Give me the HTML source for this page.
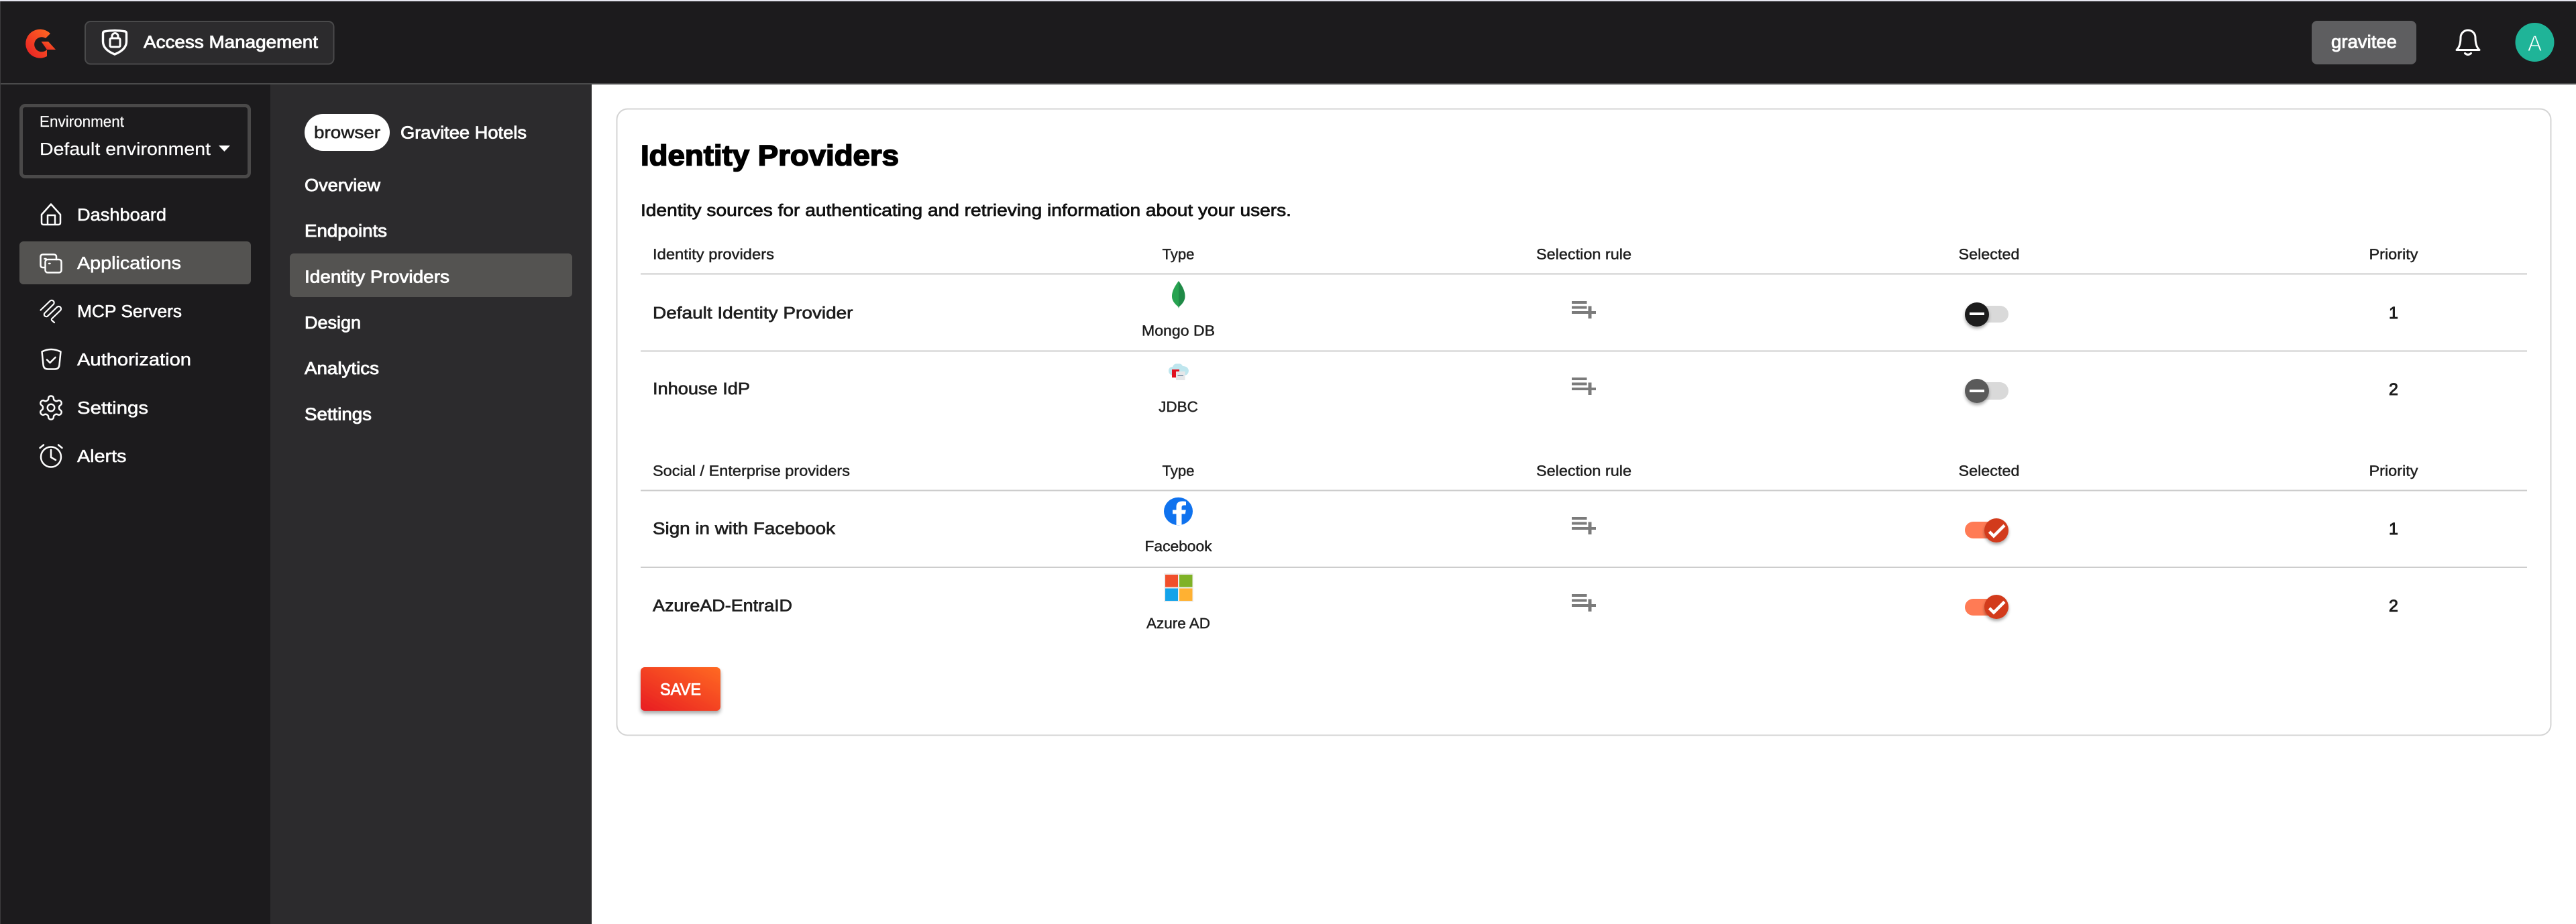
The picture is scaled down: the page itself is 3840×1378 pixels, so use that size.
<!DOCTYPE html>
<html lang="en">
<head>
<meta charset="utf-8">
<title>Identity Providers</title>
<style>
html,body{margin:0;padding:0;background:#fff;width:3840px;height:1378px;overflow:hidden}
svg{display:block}
text{font-family:"Liberation Sans",sans-serif;white-space:pre;text-rendering:geometricPrecision}
.w{fill:#fff;stroke:#fff}
.k{fill:#1f1f1f;stroke:#1f1f1f}
.r{stroke-width:.2}
.m{stroke-width:.55}
.s{stroke-width:.85}
.e{stroke-width:.45}
.ic{fill:none;stroke:#fff;stroke-width:2.5;stroke-linecap:round;stroke-linejoin:round}
.h{font-size:22px}
.l{font-size:22px}
.t{font-size:25px;stroke-width:.7}
.n{font-size:25px;stroke-width:1}
.nav{font-size:26px}
.c{text-anchor:middle}
</style>
</head>
<body>
<svg width="3840" height="1378" viewBox="0 0 3840 1378" xmlns="http://www.w3.org/2000/svg">
<defs>
<linearGradient id="gg" x1="0" y1="1" x2="1" y2="0"><stop offset="0" stop-color="#e81c24"/><stop offset="1" stop-color="#ff6a22"/></linearGradient>
<filter id="sh" x="-40%" y="-40%" width="180%" height="180%"><feDropShadow dx="0" dy="3" stdDeviation="2.5" flood-color="#000" flood-opacity=".35"/></filter>
<filter id="bs" x="-20%" y="-20%" width="140%" height="150%"><feDropShadow dx="0" dy="4" stdDeviation="3" flood-color="#000" flood-opacity=".35"/></filter>
<g id="pl" fill="#7b7b7b">
<rect x="2343" y="0" width="22.5" height="4"/><rect x="2343" y="7.5" width="22.5" height="4"/><rect x="2343" y="15" width="15" height="4"/>
<rect x="2358" y="15" width="21" height="4"/><rect x="2367.5" y="7.5" width="5" height="18.5"/>
</g>
</defs>

<!-- page -->
<rect width="3840" height="1378" fill="#fff"/>

<!-- sidebars -->
<rect x="0" y="126" width="403" height="1252" fill="#1c1b1d"/>
<rect x="403" y="126" width="479" height="1252" fill="#2c2b2d"/>

<!-- header -->
<rect width="3840" height="126" fill="#1c1b1d"/>
<rect width="3840" height="2" fill="#e6e6f0"/>
<rect y="124" width="3840" height="2" fill="#4a4a4b"/>
<rect x="0" y="2" width="1" height="1376" fill="#3d3c3e"/>

<!-- logo -->
<path d="M75 50A21.500 21.500 0 1 0 70 84V74A11 11 0 1 1 68 57Z" fill="url(#gg)"/>
<path d="M61.500 62H72L83 74H70Z" fill="url(#gg)"/>

<!-- product badge -->
<rect x="127" y="32" width="370.500" height="63.500" rx="8" fill="#2c2b2d" stroke="#4a4a4b" stroke-width="2"/>
<path d="M153.500 50Q153.500 47 156 46.800Q171 44 186 46.800Q188.500 47 188.500 50V62Q188.500 74 171 81Q153.500 74 153.500 62Z" fill="none" stroke="#fff" stroke-width="3.400" stroke-linejoin="round"/>
<rect x="164" y="57" width="15" height="13" rx="2" fill="none" stroke="#fff" stroke-width="3"/>
<path d="M167 56V54a4.500 4.500 0 0 1 9 0V56" fill="none" stroke="#fff" stroke-width="3"/>
<text class="w s" x="214" y="71.500" font-size="26" textLength="260" lengthAdjust="spacingAndGlyphs">Access Management</text>

<!-- top right -->
<rect x="3446" y="31" width="156" height="65" rx="8" fill="#5e5e60"/>
<text class="w s" x="3475" y="71.500" font-size="27" textLength="98" lengthAdjust="spacingAndGlyphs">gravitee</text>
<path d="M3662 74.500Q3668 69 3668 56A11 11 0 0 1 3690 56Q3690 69 3696 74.500Z" fill="none" stroke="#fff" stroke-width="3" stroke-linejoin="round"/>
<path d="M3674.500 79.500q4.500 4 9 0" fill="none" stroke="#fff" stroke-width="3" stroke-linecap="round"/>
<circle cx="3778.500" cy="63" r="29" fill="#1fb498"/>
<text x="3768" y="76" font-size="33" fill="#fff" stroke="#1fb498" stroke-width=".9" textLength="21" lengthAdjust="spacingAndGlyphs">A</text>

<!-- environment -->
<rect x="31.500" y="157.500" width="340" height="106" rx="6" fill="#1c1b1d" stroke="#4a4949" stroke-width="5"/>
<text class="w r" x="59" y="189" font-size="23" textLength="126" lengthAdjust="spacingAndGlyphs">Environment</text>
<text class="w r" x="59" y="231" font-size="26" textLength="255" lengthAdjust="spacingAndGlyphs">Default environment</text>
<path d="M326 217H343L334.500 226Z" fill="#fff"/>

<!-- main nav -->
<rect x="29" y="360" width="345" height="64" rx="6" fill="#545351"/>

<path class="ic" d="M62 320L76 304.500L90 320V332Q90 335 87 335H65Q62 335 62 332ZM71 335V321H82V335"/>
<text class="w m nav" x="115" y="329" textLength="133" lengthAdjust="spacingAndGlyphs">Dashboard</text>

<path class="ic" d="M67 399H64Q60.500 399 60.500 395.500V383Q60.500 379.500 64 379.500H80Q84 379.500 84 383V387"/>
<rect class="ic" x="67.500" y="387" width="24" height="19.500" rx="3.500"/>
<path class="ic" d="M66.500 386h2M73 393h1.500"/>
<text class="w m nav" x="115" y="401" textLength="155" lengthAdjust="spacingAndGlyphs">Applications</text>

<path class="ic" style="stroke-width:2.200" d="M60.500 462.500L75 448.500a3.600 3.600 0 0 1 5 5L66.500 467a3.200 3.200 0 0 0 4.500 4.500L85 458a3.500 3.500 0 0 1 5 5L77.500 475a2 2 0 0 0 0 3L81 481"/>
<text class="w m nav" x="115" y="473" textLength="156" lengthAdjust="spacingAndGlyphs">MCP Servers</text>

<path class="ic" d="M62.500 524.500Q76 517.500 90.500 524.500L88.500 544Q88 550.500 81.500 550.500H71.500Q65 550.500 64.500 544ZM70 536.500L74.500 541L82.500 533"/>
<text class="w m nav" x="115" y="545" textLength="170" lengthAdjust="spacingAndGlyphs">Authorization</text>

<g transform="translate(55 587) scale(1.750)" fill="none" stroke="#fff" stroke-width="1.400" stroke-linecap="round" stroke-linejoin="round">
<path d="M12.220 2h-.44a2 2 0 0 0-2 2v.18a2 2 0 0 1-1 1.730l-.43.250a2 2 0 0 1-2 0l-.15-.08a2 2 0 0 0-2.730.73l-.22.38a2 2 0 0 0 .73 2.730l.15.1a2 2 0 0 1 1 1.720v.51a2 2 0 0 1-1 1.740l-.15.09a2 2 0 0 0-.73 2.730l.22.38a2 2 0 0 0 2.730.73l.15-.08a2 2 0 0 1 2 0l.43.250a2 2 0 0 1 1 1.730V20a2 2 0 0 0 2 2h.44a2 2 0 0 0 2-2v-.18a2 2 0 0 1 1-1.730l.43-.25a2 2 0 0 1 2 0l.15.08a2 2 0 0 0 2.730-.73l.22-.39a2 2 0 0 0-.73-2.730l-.15-.08a2 2 0 0 1-1-1.740v-.5a2 2 0 0 1 1-1.740l.15-.09a2 2 0 0 0 .73-2.730l-.22-.38a2 2 0 0 0-2.730-.73l-.15.08a2 2 0 0 1-2 0l-.43-.25a2 2 0 0 1-1-1.730V4a2 2 0 0 0-2-2z"/>
<circle cx="12" cy="12" r="3"/>
</g>
<text class="w m nav" x="115" y="617" textLength="106" lengthAdjust="spacingAndGlyphs">Settings</text>

<circle class="ic" cx="76" cy="681.500" r="15"/>
<path class="ic" d="M76 671V682L83 686M59.500 668L65 663.500M92.500 668L87 663.500"/>
<text class="w m nav" x="115" y="689" textLength="73.500" lengthAdjust="spacingAndGlyphs">Alerts</text>

<!-- secondary nav -->
<rect x="454" y="170" width="127" height="55" rx="27.500" fill="#fff"/>
<text class="k m" x="468" y="206" font-size="25" textLength="99" lengthAdjust="spacingAndGlyphs">browser</text>
<text class="w s nav" x="597" y="206.500" textLength="188" lengthAdjust="spacingAndGlyphs">Gravitee Hotels</text>
<text class="w s nav" x="454" y="285" textLength="113" lengthAdjust="spacingAndGlyphs">Overview</text>
<text class="w s nav" x="454" y="353" textLength="123" lengthAdjust="spacingAndGlyphs">Endpoints</text>
<rect x="432" y="378" width="421" height="65" rx="6" fill="#545351"/>
<text class="w s nav" x="454" y="421.500" textLength="216" lengthAdjust="spacingAndGlyphs">Identity Providers</text>
<text class="w s nav" x="454" y="490" textLength="84" lengthAdjust="spacingAndGlyphs">Design</text>
<text class="w s nav" x="454" y="558" textLength="111" lengthAdjust="spacingAndGlyphs">Analytics</text>
<text class="w s nav" x="454" y="626.500" textLength="100" lengthAdjust="spacingAndGlyphs">Settings</text>

<!-- card -->
<rect x="919.500" y="162.500" width="2883" height="934" rx="16" fill="#fff" stroke="#d4d4d4" stroke-width="2"/>
<text x="955" y="246.500" font-size="43" font-weight="700" fill="#000" stroke="#000" stroke-width="1.700" textLength="385" lengthAdjust="spacingAndGlyphs">Identity Providers</text>
<text x="955" y="322" font-size="25" fill="#111" stroke="#111" stroke-width=".75" textLength="970" lengthAdjust="spacingAndGlyphs">Identity sources for authenticating and retrieving information about your users.</text>

<!-- table 1 -->
<text class="k e h" x="973" y="386.500" textLength="181" lengthAdjust="spacingAndGlyphs">Identity providers</text>
<text class="k e h c" x="1756.500" y="386.500" textLength="48" lengthAdjust="spacingAndGlyphs">Type</text>
<text class="k e h c" x="2361" y="386.500" textLength="142" lengthAdjust="spacingAndGlyphs">Selection rule</text>
<text class="k e h c" x="2965" y="386.500" textLength="91" lengthAdjust="spacingAndGlyphs">Selected</text>
<text class="k e h c" x="3568" y="386.500" textLength="73" lengthAdjust="spacingAndGlyphs">Priority</text>
<rect x="955" y="407.500" width="2812" height="2" fill="#cdcdcd"/>

<text class="k t" x="973" y="475" textLength="298.500" lengthAdjust="spacingAndGlyphs">Default Identity Provider</text>
<path d="M1757 419C1751 427 1746.500 435 1747 443C1747.500 450 1753 454.500 1756.300 457.500L1757 460Z" fill="#27a350"/>
<path d="M1757 419C1763 427 1767 435 1766.500 443C1766 450 1761 454.500 1757.700 457.500L1757 460Z" fill="#1f8a47"/>
<text class="k e l c" x="1756.500" y="500.500" textLength="109" lengthAdjust="spacingAndGlyphs">Mongo DB</text>
<use href="#pl" y="449"/>
<rect x="2929" y="456" width="65" height="25" rx="12.500" fill="#d9d9d9"/>
<circle cx="2947" cy="469" r="18" fill="#1c1b1d" filter="url(#sh)"/>
<rect x="2936" y="466" width="22" height="4" fill="#fff"/>
<text class="k n c" x="3568" y="475">1</text>
<rect x="955" y="522.500" width="2812" height="2" fill="#cdcdcd"/>

<text class="k t" x="973" y="588" textLength="145" lengthAdjust="spacingAndGlyphs">Inhouse IdP</text>
<path d="M1748 560Q1741.500 558 1742 552Q1743 547 1748 547Q1750 541.500 1756 542.500Q1761 541.500 1763 546Q1771 546 1772 553Q1771.500 559 1766 560Z" fill="#bfe6ee"/>
<rect x="1747" y="551" width="11" height="12" fill="#e0111f"/>
<rect x="1753" y="554" width="13.500" height="13" fill="#e6e7e9"/>
<rect x="1755.500" y="559" width="8.500" height="2" fill="#8fa3b5"/>
<text class="k e l c" x="1756.500" y="614" textLength="58.700" lengthAdjust="spacingAndGlyphs">JDBC</text>
<use href="#pl" y="563"/>
<rect x="2929" y="570" width="65" height="26" rx="13" fill="#d9d9d9"/>
<circle cx="2947" cy="583" r="18" fill="#5a5a5a" filter="url(#sh)"/>
<rect x="2936" y="581" width="22" height="4" fill="#fff"/>
<text class="k n c" x="3568" y="589">2</text>

<!-- table 2 -->
<text class="k e h" x="973" y="709.500" textLength="294" lengthAdjust="spacingAndGlyphs">Social / Enterprise providers</text>
<text class="k e h c" x="1756.500" y="709.500" textLength="48" lengthAdjust="spacingAndGlyphs">Type</text>
<text class="k e h c" x="2361" y="709.500" textLength="142" lengthAdjust="spacingAndGlyphs">Selection rule</text>
<text class="k e h c" x="2965" y="709.500" textLength="91" lengthAdjust="spacingAndGlyphs">Selected</text>
<text class="k e h c" x="3568" y="709.500" textLength="73" lengthAdjust="spacingAndGlyphs">Priority</text>
<rect x="955" y="730.500" width="2812" height="2" fill="#cdcdcd"/>

<text class="k t" x="973" y="796.500" textLength="272" lengthAdjust="spacingAndGlyphs">Sign in with Facebook</text>
<ellipse cx="1756.500" cy="762.500" rx="21.500" ry="20.700" fill="#0f72ee"/>
<path d="M1761.500 783V766.500H1766.800L1767.800 760.500H1761.500V756.500Q1761.500 753.500 1765 753.500H1768V748Q1765 747.500 1763 747.500Q1753.500 747.500 1753.500 755.500V760.500H1748V766.500H1753.500V783Z" fill="#fff"/>
<text class="k e l c" x="1756.500" y="822" textLength="100" lengthAdjust="spacingAndGlyphs">Facebook</text>
<use href="#pl" y="771"/>
<rect x="2929" y="778" width="65" height="25" rx="12.500" fill="#ff7b55"/>
<circle cx="2976" cy="791" r="18" fill="#d23a1a" filter="url(#sh)"/>
<path d="M2965.500 793L2972 799.500L2988 783.500" fill="none" stroke="#fff" stroke-width="4.500"/>
<text class="k n c" x="3568" y="797">1</text>
<rect x="955" y="845" width="2812" height="2" fill="#cdcdcd"/>

<text class="k t" x="973" y="911.500" textLength="208" lengthAdjust="spacingAndGlyphs">AzureAD-EntraID</text>
<rect x="1735" y="855" width="44" height="43" fill="#f0f0f0"/>
<rect x="1737" y="857" width="19" height="18.500" fill="#f14f2c"/>
<rect x="1758" y="857" width="19.500" height="18.500" fill="#7fb227"/>
<rect x="1737" y="877.500" width="19" height="18.500" fill="#13a3ea"/>
<rect x="1758" y="877.500" width="19.500" height="18.500" fill="#ffb132"/>
<text class="k e l c" x="1756.500" y="937" textLength="95" lengthAdjust="spacingAndGlyphs">Azure AD</text>
<use href="#pl" y="886"/>
<rect x="2929" y="893" width="65" height="25" rx="12.500" fill="#ff7b55"/>
<circle cx="2976" cy="905" r="18" fill="#d23a1a" filter="url(#sh)"/>
<path d="M2965.500 907L2972 913.500L2988 897.500" fill="none" stroke="#fff" stroke-width="4.500"/>
<text class="k n c" x="3568" y="912">2</text>

<!-- save -->
<rect x="955" y="995" width="119" height="65" rx="6" fill="url(#gg)" filter="url(#bs)"/>
<text class="w s" x="984" y="1036.500" font-size="25" textLength="61" lengthAdjust="spacingAndGlyphs">SAVE</text>
</svg>
</body>
</html>
